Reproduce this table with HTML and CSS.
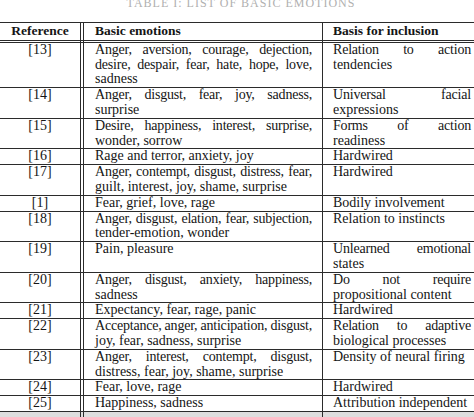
FILE: index.html
```html
<!DOCTYPE html>
<html lang="en">
<head>
<meta charset="utf-8">
<title>List of basic emotions</title>
<link rel="stylesheet" href="styles.css">
</head>
<body>
<div class="caption">TABLE I: LIST OF BASIC EMOTIONS</div>
<table class="emo">
  <colgroup>
    <col class="w-ref"><col class="w-gap"><col class="w-emo"><col class="w-basis">
  </colgroup>
  <thead>
    <tr><th class="c-ref">Reference</th><th class="c-gap"></th><th class="c-emo">Basic emotions</th><th class="c-basis">Basis for inclusion</th></tr>
  </thead>
  <tbody>
    <tr><td class="c-ref">[13]</td><td class="c-gap"></td>
      <td class="c-emo"><span class="j">Anger, aversion, courage, dejection,</span><span class="j">desire, despair, fear, hate, hope, love,</span><span class="l">sadness</span></td>
      <td class="c-basis"><span class="j">Relation to action</span><span class="l">tendencies</span></td></tr>
    <tr><td class="c-ref">[14]</td><td class="c-gap"></td>
      <td class="c-emo"><span class="j">Anger, disgust, fear, joy, sadness,</span><span class="l">surprise</span></td>
      <td class="c-basis"><span class="j">Universal facial</span><span class="l">expressions</span></td></tr>
    <tr><td class="c-ref">[15]</td><td class="c-gap"></td>
      <td class="c-emo"><span class="j">Desire, happiness, interest, surprise,</span><span class="l">wonder, sorrow</span></td>
      <td class="c-basis"><span class="j">Forms of action</span><span class="l">readiness</span></td></tr>
    <tr><td class="c-ref">[16]</td><td class="c-gap"></td>
      <td class="c-emo">Rage and terror, anxiety, joy</td>
      <td class="c-basis">Hardwired</td></tr>
    <tr><td class="c-ref">[17]</td><td class="c-gap"></td>
      <td class="c-emo"><span class="j">Anger, contempt, disgust, distress, fear,</span><span class="l">guilt, interest, joy, shame, surprise</span></td>
      <td class="c-basis">Hardwired</td></tr>
    <tr><td class="c-ref">[1]</td><td class="c-gap"></td>
      <td class="c-emo">Fear, grief, love, rage</td>
      <td class="c-basis">Bodily involvement</td></tr>
    <tr><td class="c-ref">[18]</td><td class="c-gap"></td>
      <td class="c-emo"><span class="j">Anger, disgust, elation, fear, subjection,</span><span class="l">tender-emotion, wonder</span></td>
      <td class="c-basis">Relation to instincts</td></tr>
    <tr><td class="c-ref">[19]</td><td class="c-gap"></td>
      <td class="c-emo">Pain, pleasure</td>
      <td class="c-basis"><span class="j">Unlearned emotional</span><span class="l">states</span></td></tr>
    <tr><td class="c-ref">[20]</td><td class="c-gap"></td>
      <td class="c-emo"><span class="j">Anger, disgust, anxiety, happiness,</span><span class="l">sadness</span></td>
      <td class="c-basis"><span class="j">Do not require</span><span class="l">propositional content</span></td></tr>
    <tr><td class="c-ref">[21]</td><td class="c-gap"></td>
      <td class="c-emo">Expectancy, fear, rage, panic</td>
      <td class="c-basis">Hardwired</td></tr>
    <tr><td class="c-ref">[22]</td><td class="c-gap"></td>
      <td class="c-emo"><span class="j">Acceptance, anger, anticipation, disgust,</span><span class="l">joy, fear, sadness, surprise</span></td>
      <td class="c-basis"><span class="j">Relation to adaptive</span><span class="l">biological processes</span></td></tr>
    <tr><td class="c-ref">[23]</td><td class="c-gap"></td>
      <td class="c-emo"><span class="j">Anger, interest, contempt, disgust,</span><span class="l">distress, fear, joy, shame, surprise</span></td>
      <td class="c-basis">Density of neural firing</td></tr>
    <tr><td class="c-ref">[24]</td><td class="c-gap"></td>
      <td class="c-emo">Fear, love, rage</td>
      <td class="c-basis">Hardwired</td></tr>
    <tr><td class="c-ref">[25]</td><td class="c-gap"></td>
      <td class="c-emo">Happiness, sadness</td>
      <td class="c-basis">Attribution independent</td></tr>
    <tr class="shade"><td class="c-ref"></td><td class="c-gap"></td><td class="c-emo"></td><td class="c-basis"></td></tr>
  </tbody>
</table>
</body>
</html>
```

FILE: styles.css
```css
html, body {
  margin: 0;
  padding: 0;
  overflow: hidden;
  background: #ffffff;
}

body {
  width: 474px;
  height: 417px;
  font-family: "Liberation Serif", "Times New Roman", serif;
  color: #151515;
}

.caption {
  font-size: 12px;
  line-height: 12px;
  margin: -3px 0 13px;
  padding-left: 8px;
  text-align: center;
  letter-spacing: 1px;
  color: #b0b0b0;
  white-space: nowrap;
}

.emo {
  border-collapse: separate;
  border-spacing: 0;
  table-layout: fixed;
  width: 481px;
  font-size: 14px;
  line-height: 14.8px;
}

.w-ref { width: 81px; }
.w-gap { width: 2px; }
.w-emo { width: 239px; }
.w-basis { width: 159px; }

.emo th,
.emo td {
  box-sizing: border-box;
  padding: 0;
  vertical-align: top;
  text-align: left;
  border-bottom: 1px solid #2b2b2b;
}

.emo thead th {
  font-size: 13.5px;
  font-weight: bold;
  border-top: 1px solid #2b2b2b;
  border-bottom: 3px double #2b2b2b;
  padding-top: 1px;
  padding-bottom: 1px;
}

.emo .c-ref {
  text-align: center;
  border-right: 1px solid #2b2b2b;
}

.emo .c-emo {
  border-left: 1px solid #2b2b2b;
  padding-left: 11px;
  padding-right: 10px;
}

.emo .c-basis {
  border-left: 1px solid #2b2b2b;
  padding-left: 10px;
  padding-right: 10px;
}

.j {
  display: block;
  text-align: justify;
  text-align-last: justify;
  word-spacing: -2px;
  letter-spacing: -0.2px;
}

.l {
  display: block;
}

.emo .shade td {
  height: 14px;
  background: #dedede;
  border-bottom: none;
}
```
